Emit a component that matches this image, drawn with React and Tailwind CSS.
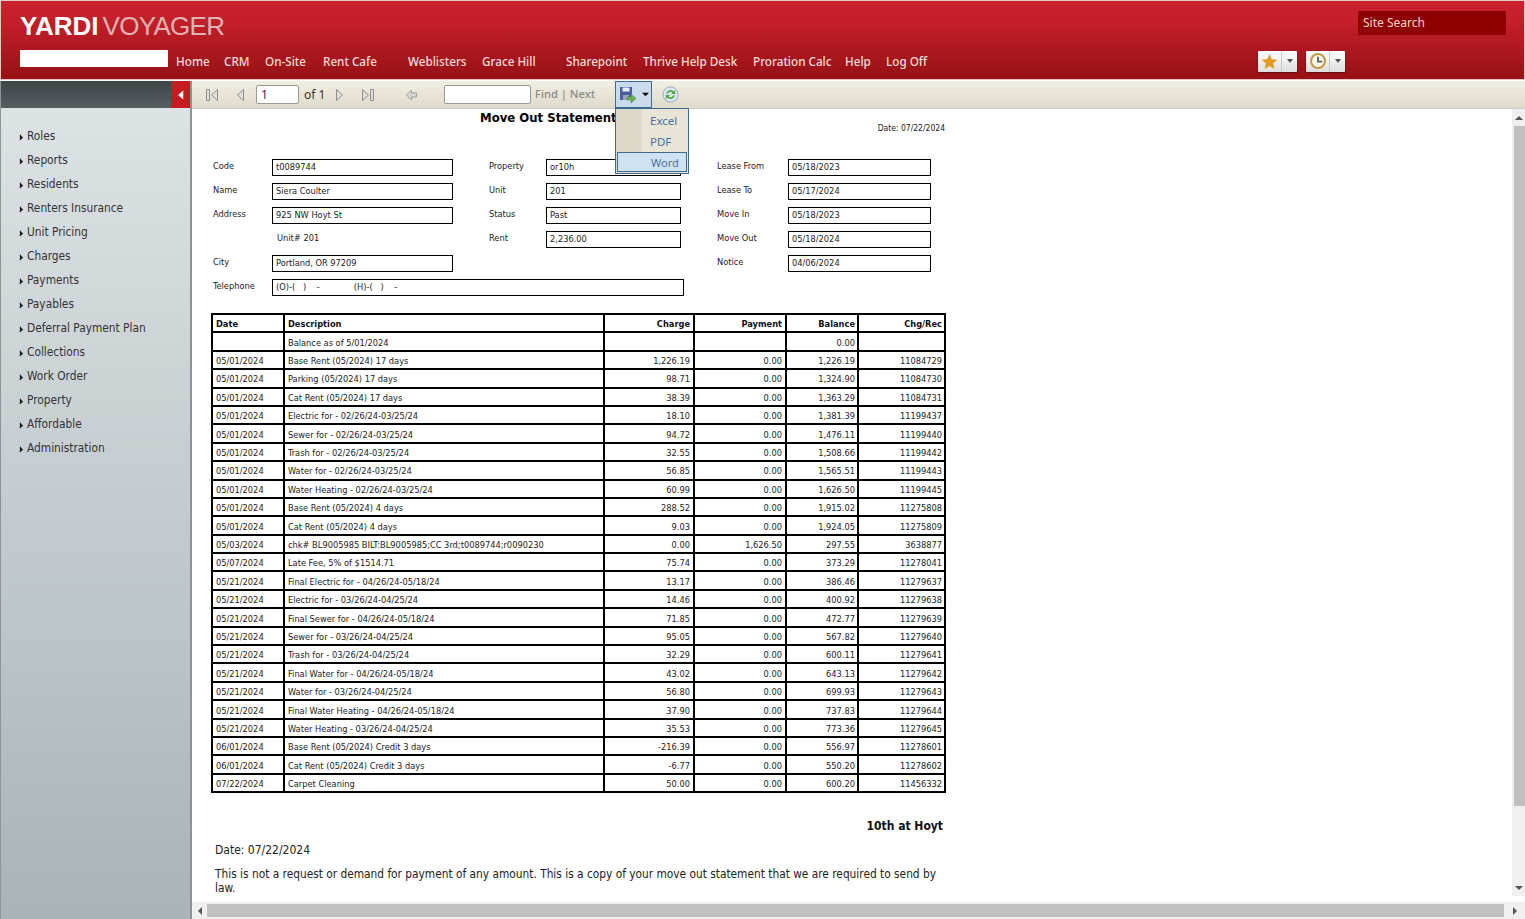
import React from 'react';

const navLinks = [
  ['Home', 'w-[48px]'],
  ['CRM', 'w-[41px]'],
  ['On-Site', 'w-[58px]'],
  ['Rent Cafe', 'w-[85px]'],
  ['Weblisters', 'w-[74px]'],
  ['Grace Hill', 'w-[84px]'],
  ['Sharepoint', 'w-[77px]'],
  ['Thrive Help Desk', 'w-[110px]'],
  ['Proration Calc', 'w-[92px]'],
  ['Help', 'w-[41px]'],
  ['Log Off', 'w-[60px]'],
];

const menuItems = [
  'Roles', 'Reports', 'Residents', 'Renters Insurance', 'Unit Pricing', 'Charges', 'Payments',
  'Payables', 'Deferral Payment Plan', 'Collections', 'Work Order', 'Property', 'Affordable', 'Administration',
];

const rows = [
  ['', 'Balance as of 5/01/2024', '', '', '0.00', ''],
  ['05/01/2024', 'Base Rent (05/2024) 17 days', '1,226.19', '0.00', '1,226.19', '11084729'],
  ['05/01/2024', 'Parking (05/2024) 17 days', '98.71', '0.00', '1,324.90', '11084730'],
  ['05/01/2024', 'Cat Rent (05/2024) 17 days', '38.39', '0.00', '1,363.29', '11084731'],
  ['05/01/2024', 'Electric for - 02/26/24-03/25/24', '18.10', '0.00', '1,381.39', '11199437'],
  ['05/01/2024', 'Sewer for - 02/26/24-03/25/24', '94.72', '0.00', '1,476.11', '11199440'],
  ['05/01/2024', 'Trash for - 02/26/24-03/25/24', '32.55', '0.00', '1,508.66', '11199442'],
  ['05/01/2024', 'Water for - 02/26/24-03/25/24', '56.85', '0.00', '1,565.51', '11199443'],
  ['05/01/2024', 'Water Heating - 02/26/24-03/25/24', '60.99', '0.00', '1,626.50', '11199445'],
  ['05/01/2024', 'Base Rent (05/2024) 4 days', '288.52', '0.00', '1,915.02', '11275808'],
  ['05/01/2024', 'Cat Rent (05/2024) 4 days', '9.03', '0.00', '1,924.05', '11275809'],
  ['05/03/2024', 'chk# BL9005985 BILT:BL9005985;CC 3rd;t0089744;r0090230', '0.00', '1,626.50', '297.55', '3638877'],
  ['05/07/2024', 'Late Fee, 5% of $1514.71', '75.74', '0.00', '373.29', '11278041'],
  ['05/21/2024', 'Final Electric for - 04/26/24-05/18/24', '13.17', '0.00', '386.46', '11279637'],
  ['05/21/2024', 'Electric for - 03/26/24-04/25/24', '14.46', '0.00', '400.92', '11279638'],
  ['05/21/2024', 'Final Sewer for - 04/26/24-05/18/24', '71.85', '0.00', '472.77', '11279639'],
  ['05/21/2024', 'Sewer for - 03/26/24-04/25/24', '95.05', '0.00', '567.82', '11279640'],
  ['05/21/2024', 'Trash for - 03/26/24-04/25/24', '32.29', '0.00', '600.11', '11279641'],
  ['05/21/2024', 'Final Water for - 04/26/24-05/18/24', '43.02', '0.00', '643.13', '11279642'],
  ['05/21/2024', 'Water for - 03/26/24-04/25/24', '56.80', '0.00', '699.93', '11279643'],
  ['05/21/2024', 'Final Water Heating - 04/26/24-05/18/24', '37.90', '0.00', '737.83', '11279644'],
  ['05/21/2024', 'Water Heating - 03/26/24-04/25/24', '35.53', '0.00', '773.36', '11279645'],
  ['06/01/2024', 'Base Rent (05/2024) Credit 3 days', '-216.39', '0.00', '556.97', '11278601'],
  ['06/01/2024', 'Cat Rent (05/2024) Credit 3 days', '-6.77', '0.00', '550.20', '11278602'],
  ['07/22/2024', 'Carpet Cleaning', '50.00', '0.00', '600.20', '11456332'],
];

const Field = ({ label, value }) => (
  <>
    <div className="text-[9.2px] leading-[13px] text-[#222]">{label}</div>
    <div className="h-[17px] border border-black pl-[3px] text-[9.2px] leading-[14px] text-[#222]">{value}</div>
  </>
);

const Gap = () => <div />;

const First = () => (
  <svg viewBox="0 0 16 16" className="w-4 h-4" fill="#e2e0d6" stroke="#8b8f90" strokeWidth="1">
    <path d="M2.5 2.5h3v11h-3z" /><path d="M13.5 2.5v11l-6-5.5z" />
  </svg>
);
const Prev = () => (
  <svg viewBox="0 0 16 16" className="w-4 h-4" fill="#e2e0d6" stroke="#8b8f90" strokeWidth="1">
    <path d="M11.5 2.5v11l-6-5.5z" />
  </svg>
);
const Next = () => (
  <svg viewBox="0 0 16 16" className="w-4 h-4" fill="#e2e0d6" stroke="#8b8f90" strokeWidth="1">
    <path d="M4.5 2.5v11l6-5.5z" />
  </svg>
);
const Last = () => (
  <svg viewBox="0 0 16 16" className="w-4 h-4" fill="#e2e0d6" stroke="#8b8f90" strokeWidth="1">
    <path d="M2.5 2.5v11l6-5.5z" /><path d="M10.5 2.5h3v11h-3z" />
  </svg>
);

const Arrow = ({ d }) => (
  <svg viewBox="0 0 8 8" className="w-2 h-2 fill-[#555]"><path d={d} /></svg>
);

export default function App() {
  return (
    <div className="flex flex-col h-[919px] w-[1525px] overflow-hidden bg-white font-['Liberation_Sans',sans-serif]">
      {/* header */}
      <header className="h-[80px] shrink-0 border border-[#e8c4c4] bg-gradient-to-b from-[#cb212d] via-[#c21e29] via-30% to-[#961115] pl-[19px] pr-[18px] pt-[10px] flex flex-col">
        <div className="flex justify-between items-start h-[39px]">
          <div className="flex items-baseline text-[26px] leading-[28px] mt-[1px]">
            <span className="font-bold text-white">YARDI</span>
            <span className="ml-[4px] tracking-[-0.7px] text-[#e0b2b2]">VOYAGER</span>
          </div>
          <div className="w-[148px] h-[24px] bg-[#8f0000] pl-[5px] text-[12px] leading-[24px] text-[#f8d8d0] font-['Noto_Sans',sans-serif]">Site Search</div>
        </div>
        <div className="flex items-center h-[20px] -mt-[1.5px]">
          <div className="w-[148px] h-[17px] bg-white shrink-0" />
          <nav className="flex items-center ml-[8px] pt-[6px] text-[11.7px] font-medium text-[#f6dcd6] font-['Noto_Sans',sans-serif]">
            {navLinks.map(([name, width]) => (
              <span key={name} className={`whitespace-nowrap ${width}`}>{name}</span>
            ))}
          </nav>
          <div className="flex items-center ml-auto mr-[161px] mt-[5px] gap-[9px]">
            <div className="flex h-[21px] w-[39px] rounded-[1px] bg-gradient-to-b from-white to-[#dedede] shadow-[0_1px_2px_rgba(0,0,0,0.4)]">
              <div className="w-[24px] flex items-center justify-center border-r border-[#c8c8c8]">
                <svg viewBox="0 0 24 24" className="w-[17px] h-[17px] fill-[#e09a1f]"><path d="M12 1.5l3.2 7.2 7.8.8-5.9 5.2 1.8 7.8L12 18.3l-6.9 4.2 1.8-7.8L1 9.5l7.8-.8z" /></svg>
              </div>
              <div className="flex-1 flex items-center justify-center"><Arrow d="M1 2h6L4 6z" /></div>
            </div>
            <div className="flex h-[21px] w-[39px] rounded-[1px] bg-gradient-to-b from-white to-[#dedede] shadow-[0_1px_2px_rgba(0,0,0,0.4)]">
              <div className="w-[24px] flex items-center justify-center border-r border-[#c8c8c8]">
                <svg viewBox="0 0 16 16" className="w-[18px] h-[18px]" fill="#fff8e8" stroke="#c09a4a" strokeWidth="1.8"><circle cx="8" cy="8" r="6.2" /><path d="M8 4.2V8.5H11.8" fill="none" stroke="#55606c" strokeWidth="1.6" /></svg>
              </div>
              <div className="flex-1 flex items-center justify-center"><Arrow d="M1 2h6L4 6z" /></div>
            </div>
          </div>
        </div>
      </header>

      <div className="flex flex-1 min-h-0 pt-[1px]">
        {/* sidebar */}
        <aside className="w-[192px] shrink-0 flex flex-col bg-gradient-to-b from-[#dfe4e6] to-[#a9b4b8] border-l border-[#8d9599] border-r-[2px] border-r-[#8b9396]">
          <div className="h-[27px] shrink-0 flex justify-end bg-gradient-to-b from-[#3e4549] to-[#575e62]">
            <div className="w-[19px] flex items-center justify-center bg-[#c41c20]">
              <svg viewBox="0 0 8 12" className="w-[6px] h-[10px] fill-white"><path d="M7 0v12L0 6z" /></svg>
            </div>
          </div>
          <ul className="pt-[17px] pl-[18px] text-[11.8px] text-[#333] font-['DejaVu_Sans_Condensed','DejaVu_Sans',sans-serif]">
            {menuItems.map((item) => (
              <li key={item} className="flex items-center h-[24px] gap-[3px]">
                <svg viewBox="0 0 6 8" className="w-[5px] h-[7px] fill-[#222]"><path d="M1 0l4 4-4 4z" /></svg>
                <span>{item}</span>
              </li>
            ))}
          </ul>
        </aside>

        <main className="flex-1 min-w-0 flex flex-col relative">
          {/* report toolbar */}
          <div className="h-[28px] shrink-0 flex items-center bg-gradient-to-b from-[#f2efe3] to-[#dedbcc] border-b border-[#cfcfc8] text-[12px] text-[#333] font-['Noto_Sans',sans-serif]">
            <div className="w-[40px] pl-[12px]"><First /></div>
            <div className="w-[24px]"><Prev /></div>
            <div className="w-[43px] h-[19px] border border-[#9a9a90] rounded-[2px] bg-white pl-[4px] leading-[18px] shrink-0">1</div>
            <span className="ml-[5px] w-[28px]">of 1</span>
            <div className="w-[28px]"><Next /></div>
            <div className="w-[36px]"><Last /></div>
            <div className="w-[48px] pl-[8px]">
              <svg viewBox="0 0 16 16" className="w-4 h-4" fill="#d6d6cf" stroke="#9a9f9f"><path d="M7.5 3L2.5 8l5 5v-3h5V6h-5z" /></svg>
            </div>
            <div className="w-[87px] h-[19px] border border-[#9a9a90] rounded-[2px] bg-white shrink-0" />
            <div className="w-[84px] shrink-0 pl-[4px] text-[11.2px] font-medium text-[#8a8a84]">
              Find | Next
            </div>
            <div className="w-[37px] h-[27px] shrink-0 flex items-center pl-[3px] gap-[5px] bg-[#c9dbec] border border-[#3f6a94]">
              <svg viewBox="0 0 18 18" className="w-[18px] h-[18px]">
                <path d="M1 1h12v13H1z" fill="#4a5b9e" />
                <path d="M3.5 1.5h7v4h-7z" fill="#e8edf5" />
                <path d="M4 9h6v5H4z" fill="#9aa5b5" />
                <path d="M8 11h4V8l5 4.5L12 17v-3H8z" fill="#6ab04f" stroke="#3e8035" strokeWidth="0.5" />
              </svg>
              <svg viewBox="0 0 8 8" className="w-[7px] h-[7px] fill-black"><path d="M0 2h8L4 6z" /></svg>
            </div>
            <div className="ml-[8px] w-[20px] h-[20px] flex items-center justify-center">
              <svg viewBox="0 0 18 18" className="w-[17px] h-[17px]" fill="none">
                <circle cx="9" cy="9" r="8" fill="#dbe7f2" stroke="#8fa6bd" />
                <path d="M4.5 8a4.6 4.6 0 018-2.2L14 4v4.5H9.5l1.6-1.6A2.7 2.7 0 006.5 8z" fill="#4fa43f" />
                <path d="M13.5 10a4.6 4.6 0 01-8 2.2L4 14V9.5h4.5l-1.6 1.6A2.7 2.7 0 0011.5 10z" fill="#4fa43f" />
              </svg>
            </div>
          </div>

          {/* export menu */}
          <div className="absolute z-10 left-[423px] top-[27px] w-[74px] h-[66px] flex flex-col bg-[#e8e5d6] border border-[#3f6a94] text-[11.5px] text-[#4c6fa5] font-['Noto_Sans',sans-serif]">
            <div className="absolute left-0 top-0 bottom-0 w-[26px] bg-[#dcd9c8]" />
            <div className="relative h-[21.5px] pl-[34px] leading-[23px]">Excel</div>
            <div className="relative h-[21px] pl-[34px] leading-[21px]">PDF</div>
            <div className="relative mx-[1px] h-[20px] pl-[33px] leading-[20px] text-[11px] bg-[#cfe2f1] border border-[#3f6a94]">Word</div>
          </div>

          <div className="flex-1 min-h-0 flex">
            {/* report page */}
            <div className="flex-1 min-w-0 overflow-hidden pl-[19px] pt-[1px] font-['DejaVu_Sans_Condensed','DejaVu_Sans',sans-serif]">
              <div className="w-[736px] relative">
                <div className="flex h-[47px]">
                  <div className="w-full pl-[269px] text-[13px] leading-[16px] font-bold text-black whitespace-nowrap">Move Out Statement</div>
                  <div className="absolute right-[2px] top-[12px] text-[8.5px] text-[#222]">Date: 07/22/2024</div>
                </div>

                <div className="grid grid-cols-[59px_181px_36px_57px_135px_36px_71px_143px] auto-rows-[24px] ml-[2px] pt-[2px]">
                  <Field label="Code" value="t0089744" />
                  <Gap />
                  <Field label="Property" value="or10h" />
                  <Gap />
                  <Field label="Lease From" value="05/18/2023" />

                  <Field label="Name" value="Siera Coulter" />
                  <Gap />
                  <Field label="Unit" value="201" />
                  <Gap />
                  <Field label="Lease To" value="05/17/2024" />

                  <Field label="Address" value="925 NW Hoyt St" />
                  <Gap />
                  <Field label="Status" value="Past" />
                  <Gap />
                  <Field label="Move In" value="05/18/2023" />

                  <div />
                  <div className="pl-[5px] text-[9.2px] leading-[14px] text-[#222]">Unit# 201</div>
                  <Gap />
                  <Field label="Rent" value="2,236.00" />
                  <Gap />
                  <Field label="Move Out" value="05/18/2024" />

                  <Field label="City" value="Portland, OR 97209" />
                  <div className="col-span-4" />
                  <Field label="Notice" value="04/06/2024" />

                  <div className="text-[9.2px] leading-[13px] text-[#222]">Telephone</div>
                  <div className="col-span-4 w-[412px] h-[17px] border border-black pl-[3px] text-[9.2px] leading-[14px] text-[#222] whitespace-pre">(O)-(   )    -             (H)-(   )    -</div>
                </div>

                <table className="table-fixed border-collapse w-[733px] mt-[10px] border-2 border-black text-[9.2px] text-[#222]">
                  <colgroup>
                    <col className="w-[72px]" /><col className="w-[320px]" /><col className="w-[90px]" /><col className="w-[92px]" /><col className="w-[72px]" /><col className="w-[87px]" />
                  </colgroup>
                  <thead>
                    <tr className="h-[18.4px] font-bold text-[#111]">
                      <th className="border-2 border-black text-left pl-[3px] font-bold p-0 pt-[2px]">Date</th>
                      <th className="border-2 border-black text-left pl-[3px] font-bold p-0 pt-[2px]">Description</th>
                      <th className="border-2 border-black text-right pr-[3px] font-bold p-0 pt-[2px]">Charge</th>
                      <th className="border-2 border-black text-right pr-[3px] font-bold p-0 pt-[2px]">Payment</th>
                      <th className="border-2 border-black text-right pr-[2px] font-bold p-0 pt-[2px]">Balance</th>
                      <th className="border-2 border-black text-right pr-[2px] font-bold p-0 pt-[2px]">Chg/Rec</th>
                    </tr>
                  </thead>
                  <tbody>
                    {rows.map((r, i) => (
                      <tr key={i} className="h-[18.4px]">
                        <td className="border-2 border-black pl-[3px] p-0 pt-[2px] whitespace-nowrap">{r[0]}</td>
                        <td className="border-2 border-black pl-[3px] p-0 pt-[2px] whitespace-nowrap">{r[1]}</td>
                        <td className="border-2 border-black text-right pr-[3px] p-0 pt-[2px]">{r[2]}</td>
                        <td className="border-2 border-black text-right pr-[3px] p-0 pt-[2px]">{r[3]}</td>
                        <td className="border-2 border-black text-right pr-[2px] p-0 pt-[2px]">{r[4]}</td>
                        <td className="border-2 border-black text-right pr-[2px] p-0 pt-[2px]">{r[5]}</td>
                      </tr>
                    ))}
                  </tbody>
                </table>

                <div className="mt-[24px] pr-[4px] text-right text-[12px] font-bold text-[#111]">10th at Hoyt</div>
                <div className="mt-[6px] pl-[4px] text-[12px] text-[#222]">Date: 07/22/2024</div>
                <p className="mt-[8px] pl-[4px] pr-[4px] text-[11.8px] leading-[14px] text-[#222]">This is not a request or demand for payment of any amount. This is a copy of your move out statement that we are required to send by law.</p>
              </div>
            </div>

            {/* vertical scrollbar */}
            <div className="w-[13px] shrink-0 mb-[6px] flex flex-col bg-[#efefef]">
              <div className="h-[17px] flex items-center justify-center"><Arrow d="M0 6L4 2l4 4z" /></div>
              <div className="h-[680px] ml-[2px] bg-[#c0c0c0]" />
              <div className="flex-1" />
              <div className="h-[16px] flex items-center justify-center"><Arrow d="M0 2l4 4 4-4z" /></div>
            </div>
          </div>

          {/* horizontal scrollbar */}
          <div className="h-[17px] shrink-0 flex items-center bg-[#efefef]">
            <div className="w-[15px] flex justify-center"><Arrow d="M6 0L2 4l4 4z" /></div>
            <div className="flex-1 h-[13px] bg-[#c0c0c0]" />
            <div className="w-[21px] flex justify-center"><Arrow d="M2 0l4 4-4 4z" /></div>
          </div>
        </main>
      </div>
    </div>
  );
}
